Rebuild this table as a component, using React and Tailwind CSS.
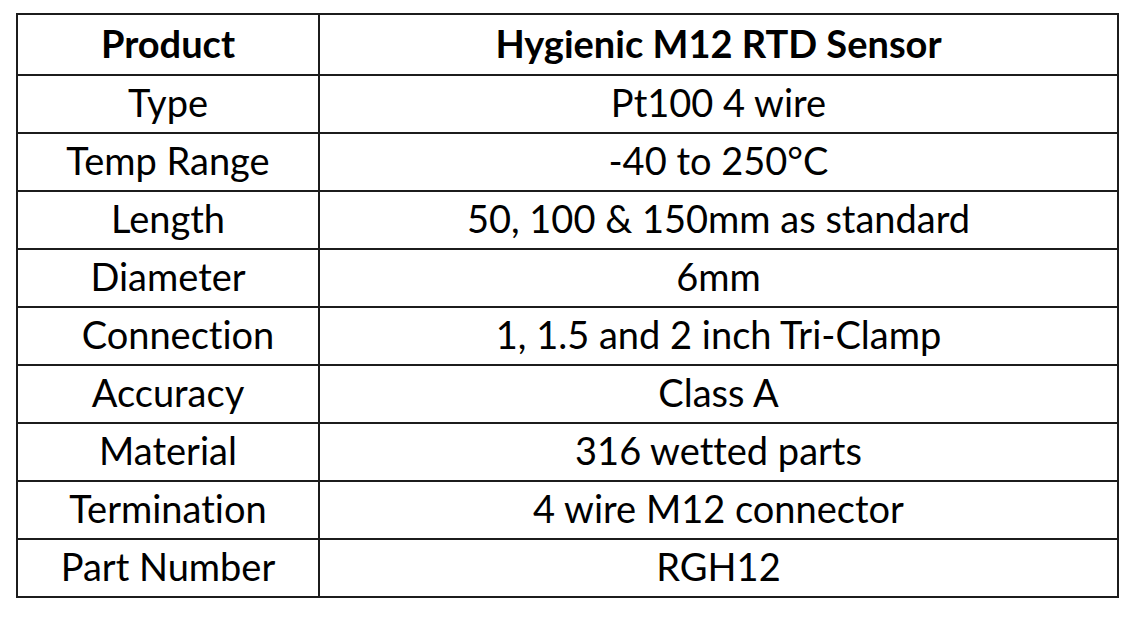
import React from "react";

const rows = [
  ["Type", "Pt100 4 wire"],
  ["Temp Range", "-40 to 250°C"],
  ["Length", "50, 100 & 150mm as standard"],
  ["Diameter", "6mm"],
  ["Connection", "1, 1.5 and 2 inch Tri-Clamp"],
  ["Accuracy", "Class A"],
  ["Material", "316 wetted parts"],
  ["Termination", "4 wire M12 connector"],
  ["Part Number", "RGH12"],
];

export default function App() {
  return (
    <div className="min-h-screen bg-white pt-[13px] pl-[16px] font-['Lato',sans-serif] text-black [font-variant-ligatures:none]">
      <table className="w-[1103px] border-collapse text-[38px] leading-none">
        <tbody>
          <tr className="h-[61px]">
            <th className="w-[302px] border-2 border-[#1c1c1c] font-bold pb-[4px]">Product</th>
            <th className="border-2 border-[#1c1c1c] font-bold pb-[4px]">Hygienic M12 RTD Sensor</th>
          </tr>
          {rows.map((r, i) => (
            <tr key={i} className="h-[58px]">
              <td
                className={`border-2 border-[#1c1c1c] text-center font-normal pb-[4px] ${
                  r[0] === "Connection" ? "pl-[20px]" : ""
                }`}
              >
                {r[0]}
              </td>
              <td className="border-2 border-[#1c1c1c] text-center font-normal pb-[4px]">{r[1]}</td>
            </tr>
          ))}
        </tbody>
      </table>
    </div>
  );
}
